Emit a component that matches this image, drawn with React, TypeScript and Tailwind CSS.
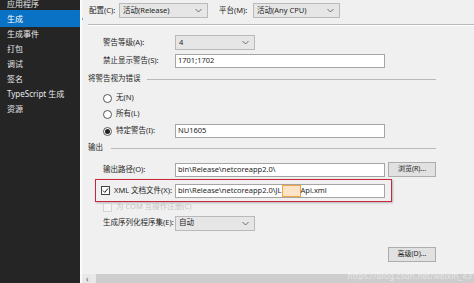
import type { ReactNode } from "react";

const FONT = "font-['Segoe_UI','Noto_Sans','Noto_Sans_CJK_SC',sans-serif]";

const NAV = ["应用程序", "生成", "生成事件", "打包", "调试", "签名", "TypeScript 生成", "资源"];

function Chevron() {
  return (
    <svg width="7" height="5" viewBox="0 0 7 5" className="shrink-0">
      <path d="M0.5 1 L3.5 4 L6.5 1" fill="none" stroke="#6d6d6d" strokeWidth="1" />
    </svg>
  );
}

function Select({ value, w }: { value: string; w: string }) {
  return (
    <div className={`${w} h-[15px] shrink-0 flex items-center justify-between pl-[3px] pr-[5px] bg-[#e6e6e6] border border-[#b9b9b9] text-[7.5px] text-[#1e1e1e] whitespace-nowrap`}>
      <span>{value}</span>
      <Chevron />
    </div>
  );
}

function Input({ children }: { children?: ReactNode }) {
  return (
    <div className="w-[210px] h-[14px] shrink-0 flex items-center pl-[2px] bg-white border border-[#a5a5a5] text-[7.5px] text-[#1e1e1e] leading-none whitespace-nowrap">
      {children}
    </div>
  );
}

function Label({ children }: { children: ReactNode }) {
  return <span className="w-[72px] shrink-0 text-[7.5px] text-[#1e1e1e] whitespace-nowrap">{children}</span>;
}

function Radio({ on }: { on?: boolean }) {
  return (
    <span className="w-[9px] h-[9px] rounded-full border border-[#555] bg-white flex items-center justify-center shrink-0">
      {on && <span className="w-[5px] h-[5px] rounded-full bg-[#222]" />}
    </span>
  );
}

function Button({ children }: { children: ReactNode }) {
  return (
    <div className="w-[48px] h-[15px] flex items-center justify-center bg-[#e1e1e1] border border-[#adadad] text-[7px] text-[#1e1e1e] whitespace-nowrap">
      {children}
    </div>
  );
}

export default function App() {
  return (
    <div className={`w-[474px] h-[283px] flex overflow-hidden bg-[#f0f0f0] ${FONT}`}>
      {/* sidebar */}
      <div className="w-[80px] h-[287px] bg-[#252526] shrink-0 flex flex-col -mt-[4px]">
        {NAV.map((item) =>
          item === "生成" ? (
            <div key={item} className="relative h-[17px] -my-px flex items-center pl-[7px] bg-[#0a72c4] text-[8px] text-white whitespace-nowrap">
              {item}
              <span className="absolute right-[-3px] top-1/2 -translate-y-1/2 w-0 h-0 border-y-[5px] border-y-transparent border-l-[4px] border-l-[#0a72c4]" />
            </div>
          ) : (
            <div key={item} className="h-[15px] flex items-center pl-[7px] text-[8px] text-[#e8e8e8] whitespace-nowrap">
              {item}
            </div>
          )
        )}
      </div>

      {/* content */}
      <div className="relative flex-1 h-full flex flex-col border-l-2 border-[#fbfbfb]">
        <div className="flex items-center h-[15px] mt-[3px] pl-[7px] text-[7.5px] text-[#1e1e1e] whitespace-nowrap">
          <span className="w-[30px]">配置(C):</span>
          <Select value="活动(Release)" w="w-[89px]" />
          <span className="ml-[11px] w-[34px]">平台(M):</span>
          <Select value="活动(Any CPU)" w="w-[87px]" />
        </div>
        <div className="mt-[6px] ml-[6px] border-t border-[#b8b8b8] border-b border-b-white" />

        <div className="flex items-center h-[13px] mt-[10px] pl-[21px]">
          <Label>警告等级(A):</Label>
          <Select value="4" w="w-[80px]" />
        </div>
        <div className="flex items-center h-[14px] mt-[5px] pl-[21px]">
          <Label>禁止显示警告(S):</Label>
          <Input>1701;1702</Input>
        </div>

        <div className="flex items-center h-[12px] mt-[5px] pl-[6px] pr-[38px] gap-[6px] text-[7.5px] text-[#1e1e1e] whitespace-nowrap">
          <span>将警告视为错误</span>
          <div className="flex-1 border-t border-[#b8b8b8]" />
        </div>
        <div className="flex items-center h-[12px] mt-[7px] pl-[21px] gap-[4px] text-[7.5px] text-[#1e1e1e]">
          <Radio />
          <span>无(N)</span>
        </div>
        <div className="flex items-center h-[12px] mt-[4px] pl-[21px] gap-[4px] text-[7.5px] text-[#1e1e1e]">
          <Radio />
          <span>所有(L)</span>
        </div>
        <div className="flex items-center h-[14px] mt-[4px] pl-[21px]">
          <span className="w-[72px] shrink-0 flex items-center gap-[4px] text-[7.5px] text-[#1e1e1e] whitespace-nowrap">
            <Radio on />
            特定警告(I):
          </span>
          <Input>NU1605</Input>
        </div>

        <div className="flex items-center h-[12px] mt-[4px] pl-[6px] pr-[38px] gap-[8px] text-[7.5px] text-[#1e1e1e]">
          <span>输出</span>
          <div className="flex-1 border-t border-[#b8b8b8]" />
        </div>
        <div className="flex items-center h-[15px] mt-[8px] pl-[21px]">
          <Label>输出路径(O):</Label>
          <Input>bin\Release\netcoreapp2.0\</Input>
          <div className="ml-[3px]">
            <Button>浏览(R)...</Button>
          </div>
        </div>

        <div className="w-[297px] h-[23px] mt-[2px] ml-[13px] flex items-center pl-[5px] border-[1.5px] border-[#c8283a] shadow-[1px_1px_2px_rgba(0,0,0,0.25)]">
          <span className="w-[74px] shrink-0 flex items-center gap-[4px] text-[7.5px] text-[#1e1e1e] whitespace-nowrap">
            <span className="w-[9px] h-[9px] shrink-0 border border-[#444] bg-white flex items-center justify-center">
              <svg width="7" height="7" viewBox="0 0 7 7">
                <path d="M1 3.6 L2.8 5.4 L6 1.4" fill="none" stroke="#222" strokeWidth="1" />
              </svg>
            </span>
            XML 文档文件(X):
          </span>
          <Input>
            <span>bin\Release\netcoreapp2.0\JL</span>
            <span className="w-[19px] h-[12px] bg-[#fde3c8] border border-[#f2a540]" />
            <span>Api.xml</span>
          </Input>
        </div>

        <div className="flex items-center h-[12px] mt-[-1px] pl-[21px] gap-[4px] text-[7.5px] text-[#c4c4c4] whitespace-nowrap">
          <span className="w-[9px] h-[9px] border border-[#d4d4d4] bg-[#f4f4f4]" />
          <span>为 COM 互操作注册(C)</span>
        </div>
        <div className="flex items-center h-[14px] mt-[3px] pl-[21px]">
          <Label>生成序列化程序集(E):</Label>
          <Select value="自动" w="w-[80px]" />
        </div>

        <div className="mt-[17px] ml-[306px]">
          <Button>高级(D)...</Button>
        </div>

        <div className="mt-auto h-[9px] flex items-center bg-[#e8e8e8]">
          <span className="w-[14px] pl-[4px] text-[8px] leading-none text-[#555]">‹</span>
          <div className="flex-1 h-full bg-[#cdcdcd]" />
        </div>
        <span className="absolute right-[2px] bottom-[1px] text-[8px] text-white/50 tracking-wide whitespace-nowrap">
          https://blog.csdn.net/weixin_43
        </span>
      </div>
    </div>
  );
}
